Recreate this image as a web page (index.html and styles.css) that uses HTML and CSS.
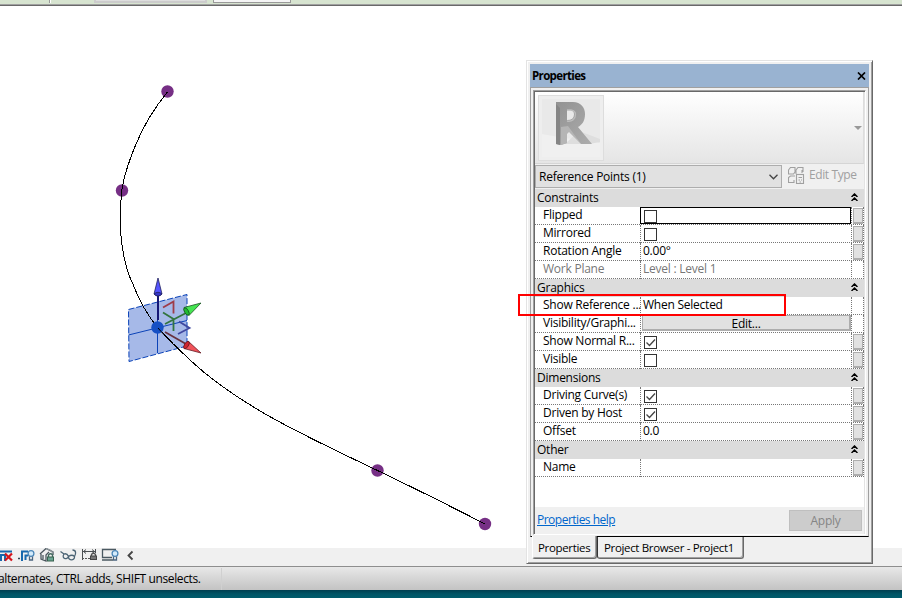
FILE: index.html
```html
<!DOCTYPE html>
<html lang="en">
<head>
<meta charset="utf-8">
<title>Properties</title>
<link rel="stylesheet" href="styles.css">
</head>
<body>
<svg class="defs" width="0" height="0">
  <defs>
    <symbol id="chev" viewBox="0 0 7 9"><path d="M1 4V3.500L3.500 1 6 3.500V4M1 8V7.500L3.500 5 6 7.500V8" fill="none" stroke="#000" stroke-width="1.500"/></symbol>
    <symbol id="tick" viewBox="0 0 13 13"><path d="M2.500 6.500L5.500 9.500 11 3.500" fill="none" stroke="#444" stroke-width="1.300"/></symbol>
  </defs>
</svg>
<div class="app">
  <div class="options"><i class="sep"></i><i class="field"></i><i class="input"></i></div>
  <main class="canvas">
    <svg width="526" height="542" viewBox="0 6 526 542">
      <g fill="#762f85">
        <circle cx="167.500" cy="91.500" r="6.200"/><circle cx="122" cy="190.500" r="6.200"/>
        <circle cx="377.500" cy="470.500" r="6.200"/><circle cx="485" cy="524" r="6.200"/>
      </g>
      <path d="M128.500 309.500L187 294.500V346L129 361.500Z" fill="#a6b9e8"/>
      <path d="M128.500 309.500L187 294.500V346L129 361.500Z" fill="none" stroke="#0b43b8" stroke-dasharray="6 2"/>
      <path d="M128.500 335L187 320.500M157.500 302V353" stroke="#0b43b8"/>
      <path d="M167.500 92C155 107 144 125 136 144C127 166 122 181 121.500 195C120 210 119.500 220 120.500 232C122 248 126 270 132 282C139 300 147 315 158 328C168 339 178 349 190 360C240 407 310 438 377.500 470.500C414 488 450 506 485 524" fill="none" stroke="#000" stroke-width="1" shape-rendering="crispEdges"/>
      <circle cx="157.500" cy="327.500" r="6.200" fill="#1650c4"/>
      <g fill="none" stroke-width="1.800">
        <path d="M163 307.500L173.500 301.500V313.500" stroke="#9e3c48"/>
        <path d="M163 312.500L173.500 319V331M165 324L186 313" stroke="#33753f"/>
        <path d="M179 321.500L189.500 328 178 334" stroke="#4048a0"/>
        <path d="M158 320V295" stroke="#161775" stroke-width="2"/>
        <path d="M165 332L186 344" stroke="#67313e"/>
      </g>
      <path d="M158 328L166 337" stroke="#000"/>
      <g stroke-width=".8">
        <path d="M158 278L162 294Q158 298 154 294Z" fill="#5555ff" stroke="#20205c"/>
        <path d="M201 303L184 307.500Q184 312 189 315.500Z" fill="#45e551" stroke="#195222"/>
        <path d="M201 353L188 341Q184 344 184 348.500Z" fill="#f05259" stroke="#641a23"/>
        <path d="M154 294Q158 290.500 162 294Q158 298 154 294" fill="#3535c7" stroke="#20205c"/>
        <ellipse cx="186.500" cy="311.500" rx="2" ry="4.200" transform="rotate(-30 186.500 311.500)" fill="#20ba31" stroke="#195222"/>
        <ellipse cx="186.500" cy="345" rx="2" ry="4.200" transform="rotate(32 186.500 345)" fill="#d1222d" stroke="#641a23"/>
      </g>
    </svg>
  </main>
  <div class="viewbar">
    <svg width="140" height="18" viewBox="0 548 140 18" fill="none" stroke-width="1.300">
      <path d="M0 551.500H12M1 561V555H6M5 561V555" stroke="#1768ad" stroke-width="2"/><path d="M5 553.500L12 560.500M12 553.500L5 560.500" stroke="#d4141c" stroke-width="2.200"/>
      <path d="M18 558.500H20" stroke="#345"/><path d="M22 561V551.500H28M25.500 560V555.500H28" stroke="#1768ad" stroke-width="2"/><circle cx="31" cy="553.500" r="2.900" fill="#d5ebfb" stroke="#4c87b8"/><path d="M29.500 556.500V560H32.500V556.500" stroke="#4c6680"/>
      <path d="M40 554L46 548.500 53 552V555M41 554V559L46 561V555L49 552M43 555V559" stroke="#4b565e"/><path d="M46 548.500L51 550.500 53 553" stroke="#8e979c"/><path d="M48.500 557V555Q50.500 552.500 52.500 555V557" stroke="#42685e"/><rect x="47.500" y="557" width="6" height="4" fill="#69a390" stroke="#38614f" stroke-width="1"/>
      <path d="M60.500 551.500L64 554M64 554C61 558.500 67 560.500 68.500 556.500M68.500 556.500C68 561 75 561 74.500 556.500C76 554 76.500 550 72.500 550M64 554Q67 553 68.500 556.500Q72 554 74.500 556.500" stroke="#4c6475"/>
      <path d="M82.500 549V560M95.500 549V553M83 551.500H95M86 549.500L83.500 551.500 86 553.500M92 549.500L94.500 551.500 92 553.500" stroke="#4b4f52" stroke-width="1"/><path d="M82 558.500H90" stroke="#555" stroke-width="1" stroke-dasharray="2 1"/><path d="M91.500 556V554.500Q93.500 552 95.500 554.500V556" stroke="#555"/><rect x="90.500" y="556" width="6" height="3.500" fill="#777" stroke="#444" stroke-width="1"/>
      <path d="M116 549.500H102.500V557.500H112M102 560H113" stroke="#4b5962"/><circle cx="115" cy="553.500" r="2.900" fill="#d5ebfb" stroke="#4c87b8"/><path d="M113.500 556.500V560H116.500V556.500" stroke="#4c6680"/>
      <path d="M132.500 551.500L128.500 555.500 132.500 559.500" stroke="#444" stroke-width="1.800"/>
    </svg>
  </div>
  <div class="status"><span class="t">alternates, CTRL adds, SHIFT unselects.</span></div>
  <div class="desk"></div>
</div>

<section class="palette">
  <header class="title"><b class="t">Properties</b><svg width="9" height="8" viewBox="0 0 9 8"><path d="M1 .5L8 7.500M8 .5L1 7.500" stroke="#000" stroke-width="1.700"/></svg></header>
  <div class="frame"><div class="sunken">
    <div class="type">
      <div class="thumb"><svg width="64" height="64" viewBox="0 0 64 64">
        <defs><linearGradient id="rg" x2="1" y2="1"><stop stop-color="#929292"/><stop offset="1" stop-color="#adadad"/></linearGradient></defs>
        <rect x="3" y="3" width="58" height="58" fill="#e9e9e9"/><path d="M3 38L26 42 61 47V61H3Z" fill="#f0f0f0"/><path d="M26 48L40 35 61 43V46L50 48Z" fill="#dedede"/>
        <path fill-rule="evenodd" d="M17 6H34C42 6 46 12 46 18C46 25 43 29 39 31L53 48H42L30 33 28 35V47L22 49 17 48ZM28 14V24Q35 24 35 18.500Q35 14 31 14Z" fill="url(#rg)"/>
        <path d="M17 8L21 12V49L17 48Z" fill="#858585"/><path d="M22 31L29 30 42 48 30 36 28 38V47L22 49Z" fill="#b5b5b5"/><path d="M28 14H32Q38 15 36 21Q34 26 28 25" fill="none" stroke="#bcbcbc" stroke-width="1.500"/>
      </svg></div>
      <i class="drop"></i>
    </div>
    <div class="picker">
      <div class="combo"><span class="t">Reference Points (1)</span><svg width="9" height="6" viewBox="0 0 9 6"><path d="M.5 .8L4.500 4.800 8.500 .8" fill="none" stroke="#444" stroke-width="1.300"/></svg></div>
      <div class="edit"><svg width="17" height="17" viewBox="0 0 17 17" fill="none" stroke="#a0a0a0" stroke-width="1.100"><path d="M.5 3L2.500 .5H7V5L5.500 7H.5ZM8 3L10 .5H15V5M8 3V7M14 3V6M7 9H2.500L.5 10.500V15.500H6V13"/><rect x="8.500" y="7.500" width="7" height="9"/><path d="M10.500 10.500H14M10.500 13H12M13 13H14M11.500 15H13"/></svg><span class="t">Edit Type</span></div>
    </div>
    <div class="grid">
      <div class="group"><span class="t">Constraints</span><svg width="7" height="9"><use href="#chev"/></svg></div>
      <div class="row"><label class="t">Flipped</label><div class="val active"><i class="box"></i></div><div class="end"><i></i></div></div>
      <div class="row"><label class="t">Mirrored</label><div class="val"><i class="box"></i></div><div class="end"><i></i></div></div>
      <div class="row"><label class="t">Rotation Angle</label><div class="val"><span class="t">0.00°</span></div><div class="end"><i></i></div></div>
      <div class="row off"><label class="t">Work Plane</label><div class="val"><span class="t">Level : Level 1</span></div><div class="end"></div></div>
      <div class="group"><span class="t">Graphics</span><svg width="7" height="9"><use href="#chev"/></svg></div>
      <div class="row"><label class="t">Show Reference ...</label><div class="val"><span class="t">When Selected</span></div><div class="end"></div></div>
      <div class="row"><label class="t">Visibility/Graphi...</label><div class="val"><div class="button"><span class="t">Edit...</span></div></div><div class="end"></div></div>
      <div class="row"><label class="t">Show Normal R...</label><div class="val"><i class="box"><svg width="11" height="11" viewBox="1 1 11 11"><use href="#tick" width="13" height="13"/></svg></i></div><div class="end"><i></i></div></div>
      <div class="row"><label class="t">Visible</label><div class="val"><i class="box"></i></div><div class="end"><i></i></div></div>
      <div class="group"><span class="t">Dimensions</span><svg width="7" height="9"><use href="#chev"/></svg></div>
      <div class="row"><label class="t">Driving Curve(s)</label><div class="val"><i class="box"><svg width="11" height="11" viewBox="1 1 11 11"><use href="#tick" width="13" height="13"/></svg></i></div><div class="end"><i></i></div></div>
      <div class="row"><label class="t">Driven by Host</label><div class="val"><i class="box"><svg width="11" height="11" viewBox="1 1 11 11"><use href="#tick" width="13" height="13"/></svg></i></div><div class="end"><i></i></div></div>
      <div class="row"><label class="t">Offset</label><div class="val"><span class="t">0.0</span></div><div class="end"><i></i></div></div>
      <div class="group"><span class="t">Other</span><svg width="7" height="9"><use href="#chev"/></svg></div>
      <div class="row"><label class="t">Name</label><div class="val"></div><div class="end"><i></i></div></div>
    </div>
    <footer class="foot"><a class="t">Properties help</a><div class="apply"><span class="t">Apply</span></div></footer>
  </div></div>
  <nav class="tabs"><div class="tab current"><span class="t">Properties</span></div><div class="tab"><span class="t">Project Browser - Project1</span></div></nav>
</section>
<div class="callout"></div>
</body>
</html>
```
FILE: styles.css
```css
* { box-sizing: border-box; }
body { margin: 0; width: 902px; height: 598px; overflow: hidden; background: #fff; color: #000; font: 12px/16px "Open Sans", "Noto Sans", sans-serif; letter-spacing: -0.24px; }
svg { display: block; flex: none; }
.defs { position: absolute; }
.t { white-space: nowrap; }
.app { display: flex; flex-direction: column; height: 598px; }

.options { display: flex; height: 6px; flex: none; background: #d7e4d0; border-bottom: 1px solid #696969; box-shadow: inset 0 -1px #a0a0a0; }
.options .sep { width: 2px; height: 3px; margin-left: 49px; background: #fff; border-left: 1px solid #999; }
.options .field { width: 113px; height: 3px; margin-left: 43px; background: #dedede; border: 2px solid #ccc; border-top: 0; }
.options .input { width: 78px; height: 3px; margin-left: 6px; background: #f5f5f5; border: 1px solid #999; border-top: 0; }
.canvas { flex: 1; min-height: 0; }
.viewbar { height: 18px; flex: none; background: #f0f0f0; }
.status { display: flex; align-items: center; height: 24px; flex: none; background: linear-gradient(#e8e8e8, #c3c3c3); border-top: 1px solid #8e8e8e; }
.status .t { width: 224px; height: 22px; line-height: 22px; margin-left: -2px; letter-spacing: -0.38px; border-right: 1px solid #d0d0d0; }
.desk { height: 8px; flex: none; background: linear-gradient(#003f50, #005566 4px, #005c6c); }

.palette { position: absolute; left: 526px; top: 60px; width: 347px; height: 504px; padding: 2px; background: #f0f0f0; border: 1px solid; border-color: #e3e3e3 #696969 #696969 #e3e3e3; box-shadow: inset 1px 1px #fff, inset -1px -1px #a0a0a0; }
.title { display: flex; align-items: center; justify-content: space-between; height: 23px; width: 339px; margin: 1px 0 0 1px; padding: 0 4px 0 2px; background: #99b3d1; }
.title .t { font-size: 11.5px; letter-spacing: -0.65px; }
.title svg { margin-right: -1px; }
.frame { width: 339px; height: 450px; margin-left: 1px; padding: 2px; border: solid #a0a0a0; border-width: 1px 1px 0 1px; border-bottom: 1px solid #000; }
.sunken { width: 333px; height: 445px; border: 1px solid; border-color: #a0a0a0 #fff #fff #a0a0a0; box-shadow: inset 1px 1px #696969, inset -1px -1px #e3e3e3; padding: 1px; }
.type { display: flex; align-items: center; justify-content: space-between; height: 72px; padding: 0 1px 0 3px; background: linear-gradient(#fff, #e5e5e5); border-right: 1px solid #ddd; border-bottom: 1px solid #d5d5d5; }
.thumb { width: 66px; height: 66px; border: 1px solid #ddd; background: #eee; }
.drop { border: 4px solid transparent; border-top-color: #999; border-bottom: 0; }
.picker { display: flex; height: 25px; padding-top: 1px; }
.combo { display: flex; align-items: center; justify-content: space-between; width: 247px; height: 23px; padding: 0 3px; background: #e1e1e1; border: 1px solid #adadad; }
.edit { display: flex; align-items: center; gap: 4px; height: 20px; padding-left: 6px; color: #a0a0a0; letter-spacing: -0.4px; }
.grid { height: 318px; background: #fff; }
.group { display: flex; justify-content: space-between; align-items: center; height: 18px; padding: 0 6px 0 2px; background: #dcdcdc; }
.group svg { margin-top: -1px; }
.row { display: flex; height: 18px; border-bottom: 1px dotted #777; }
.row label { width: 105px; flex: none; padding-left: 8px; }
.val { display: flex; width: 211px; height: 18px; flex: none; padding-left: 2px; border-left: 1px dotted #777; }
.val.active { height: 17px; border: 1px solid #000; }
.box { width: 13px; height: 13px; margin: 3px 0 0 1px; border: 1px solid #333; flex: none; background: #fff; }
.active .box { margin-top: 2px; }
.button { width: 209px; height: 16px; margin-left: -1px; line-height: 15px; text-align: center; background: #e1e1e1; border: solid #adadad; border-width: 1px 2px 2px 1px; }
.end { width: 13px; height: 18px; padding-left: 1px; border: dotted #777; border-width: 0 1px; }
.end i { display: block; width: 10px; height: 16px; margin-top: 1px; background: #e1e1e1; border: 1px solid #adadad; border-bottom-width: 2px; }
.off { color: #777; }
.foot { display: flex; justify-content: space-between; height: 27px; padding: 3px 2px 0 2px; background: #f0f0f0; }
.foot a { color: #0066cc; text-decoration: underline; line-height: 20px; letter-spacing: -0.5px; }
.apply { width: 73px; height: 21px; line-height: 20px; text-align: center; color: #858585; background: #ccc; border: 1px solid #bfbfbf; }
.tabs { display: flex; margin-left: 3px; height: 22px; }
.tab { height: 22px; width: 147px; padding: 0 6px; line-height: 22px; font-size: 11.5px; letter-spacing: -0.34px; border: 1px solid #696969; border-top: 0; border-left-color: #333; border-radius: 0 0 3px 3px; box-shadow: inset -1px -1px #a0a0a0; }
.tab.current { width: 65px; margin-top: -1px; height: 23px; background: #f0f0f0; border-left-color: #fff; padding-top: 1px; padding-left: 5px; }
.callout { position: absolute; left: 518px; top: 294px; width: 268px; height: 22px; border: 2px solid #f00; }
```
